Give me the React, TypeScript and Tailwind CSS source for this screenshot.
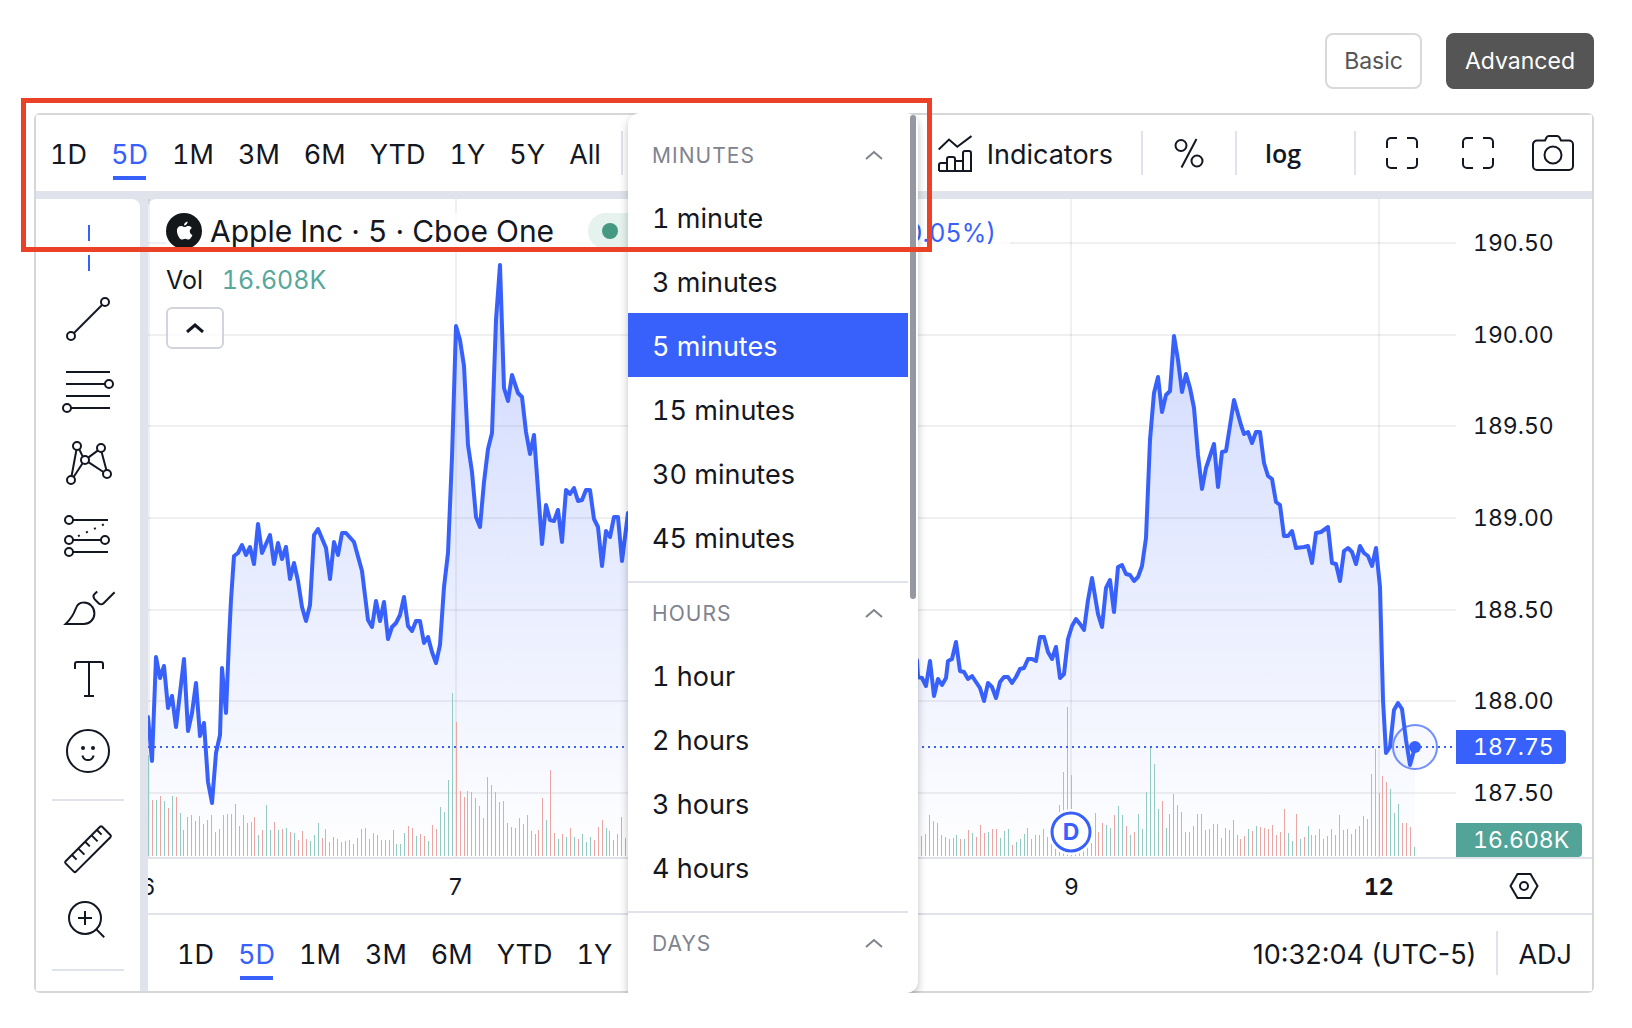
import type { ReactNode } from "react";

const RANGES = ["1D", "5D", "1M", "3M", "6M", "YTD", "1Y", "5Y", "All"];

const INTERVALS = [
  {
    title: "Minutes",
    items: ["1 minute", "3 minutes", "5 minutes", "15 minutes", "30 minutes", "45 minutes"],
  },
  { title: "Hours", items: ["1 hour", "2 hours", "3 hours", "4 hours"] },
  { title: "Days", items: [] },
];

const PRICES = ["190.50", "190.00", "189.50", "189.00", "188.50", "188.00", "187.50"];

const GRID_Y = [243, 335, 426, 518, 610, 701, 793];
const GRID_X = [149, 456, 764, 1071, 1379];

const BAR_STEP = 3.944;

const LINE =
  "148,717 152,761 156,657 160,678 164,666 168,708 172,696 176,727 184,659 188,731 192,713 196,683 200,736 204,723 208,782 212,803 216,753 220,735 222,668 226,713 229,640 231,600 234,556 238,553 242,545 246,555 250,547 254,564 258,524 262,553 270,535 274,564 278,543 282,559 286,547 290,579 294,563 298,581 302,607 306,621 310,605 314,535 318,529 326,548 330,579 334,542 338,555 342,533 346,533 354,542 362,571 368,620 372,627 376,601 380,621 384,602 388,639 392,627 396,623 400,615 404,597 408,626 412,631 416,621 420,621 424,643 428,637 432,652 436,663 440,645 444,587 448,553 452,457 456,326 460,340 464,366 468,445 472,472 476,517 480,527 484,482 488,449 492,433 496,320 500,265 504,388 508,401 512,375 518,393 522,397 526,432 530,454 534,435 542,544 546,505 550,520 554,521 558,510 562,542 566,490 570,494 574,488 578,501 582,500 586,490 590,490 594,519 598,527 602,566 606,531 610,537 614,517 618,517 622,561 628,513 " +
  "917,660 918,677 922,678 926,686 930,661 934,696 938,679 942,685 946,678 948,661 952,659 956,642 960,671 964,672 968,679 972,676 976,682 980,688 984,701 988,683 992,687 996,698 1000,682 1004,677 1008,677 1012,683 1016,677 1020,669 1024,668 1028,659 1032,659 1036,661 1040,637 1044,637 1048,652 1052,659 1056,647 1060,678 1064,674 1068,639 1072,626 1076,619 1080,624 1084,630 1088,600 1092,578 1098,614 1102,627 1106,588 1110,580 1114,612 1118,567 1122,565 1126,574 1130,575 1134,581 1138,577 1142,566 1146,538 1150,440 1154,393 1158,377 1162,412 1166,395 1170,391 1174,336 1178,360 1182,392 1186,374 1190,388 1194,408 1198,455 1202,489 1206,468 1214,444 1218,487 1222,452 1226,451 1234,400 1241,425 1244,434 1248,432 1252,443 1256,432 1260,432 1264,463 1268,476 1272,479 1276,502 1280,505 1284,536 1288,536 1292,531 1296,548 1304,547 1308,546 1312,563 1316,533 1321,532 1328,527 1332,563 1336,564 1340,581 1344,551 1348,548 1352,552 1356,564 1360,546 1364,553 1368,556 1372,566 1376,548 1380,587 1383,700 1386,753 1390,747 1394,710 1398,703 1402,709 1406,740 1410,765 1415,747";

// g = up, r = down, followed by the bar height
const VOLUME_LEFT =
  "g101 r56 g56 r60 g55 r48 g60 r59 g43 g26 r39 g41 g35 r40 g32 r36 r41 g24 g27 g41 r42 g42 g52 g30 g41 r33 g34 r39 g21 r26 g51 g26 r34 g26 r27 g28 r24 g23 r16 r25 r17 g15 g21 g33 r18 r27 r14 g19 r17 g14 g15 r16 r12 r18 r27 r28 r17 r23 g21 r16 g16 r16 g26 g12 g12 g23 r30 r28 g20 r22 r20 g15 r31 r27 g49 g44 g76 g163 r134 r65 r59 r65 r64 r58 r50 g38 g79 g71 g64 g54 r55 r33 g29 r28 r38 r32 r41 r25 g22 r26 r58 g36 r86 r23 g17 r22 g19 r28 g19 r17 g22 g14 g19 r16 r29 r36 g28 r25 g16 r22 r39 g18";
const VOLUME_RIGHT =
  "g20 r22 g41 r35 g33 r21 g19 g17 g18 g21 r17 g17 r26 g23 r19 r31 r23 g24 r27 r27 g18 g25 g27 r11 g14 g17 g22 g28 g17 r21 g21 r27 g19 g26 g8 r51 r84 g149 r81 r36 r20 r14 g12 g13 r43 r24 r33 g31 g28 r41 g50 g41 r30 g21 r24 g42 g27 g64 g110 g92 g47 r55 g28 g42 g62 r51 r44 g24 r24 r30 r42 r42 g26 g27 g32 r32 g18 g28 g26 g36 r21 r17 r20 g27 r25 g30 r29 r28 r27 r31 r21 r24 r47 g23 g15 r42 g17 r19 g30 r21 g21 g27 r17 g20 r27 r21 r41 g26 g27 r22 r27 g30 r40 r37 r82 g107 g63 r80 r74 g67 g43 g52 r33 r33 r29 g9";

function VolumeBars({ data, start }: { data: string; start: number }) {
  return (
    <g shapeRendering="crispEdges">
      {data.split(" ").map((bar, i) => {
        const height = Number(bar.slice(1));
        return (
          <rect
            key={i}
            x={Math.round(start + i * BAR_STEP)}
            y={856 - height}
            width={1}
            height={height}
            fill={bar[0] === "g" ? "#93cbc3" : "#eba5a3"}
          />
        );
      })}
    </g>
  );
}

function Chart() {
  return (
    <svg
      viewBox="148 199 1308 658"
      preserveAspectRatio="none"
      className="block h-[658px] w-full"
      role="img"
      aria-label="Apple Inc price chart"
    >
      <defs>
        <linearGradient id="area" gradientUnits="userSpaceOnUse" x1="0" y1="199" x2="0" y2="857">
          <stop offset="0" stopColor="#3861fb" stopOpacity="0.28" />
          <stop offset="1" stopColor="#3861fb" stopOpacity="0" />
        </linearGradient>
      </defs>
      <g stroke="#000" strokeOpacity="0.06" strokeWidth="2">
        {GRID_Y.map((y) => (
          <line key={y} x1="148" x2="1456" y1={y} y2={y} />
        ))}
        {GRID_X.map((x) => (
          <line key={x} x1={x} x2={x} y1="199" y2="857" />
        ))}
      </g>
      <polygon points={`148,857 ${LINE} 1415,857`} fill="url(#area)" />
      <VolumeBars data={VOLUME_LEFT} start={148} />
      <VolumeBars data={VOLUME_RIGHT} start={921} />
      <line x1="148" x2="1456" y1="747" y2="747" stroke="#3861fb" strokeWidth="2" strokeDasharray="2 4" />
      <polyline
        points={LINE}
        fill="none"
        stroke="#3861fb"
        strokeWidth="4"
        strokeLinejoin="round"
        strokeLinecap="round"
      />
      <circle cx="1415" cy="747" r="22" fill="#3861fb" fillOpacity="0.04" stroke="#3861fb" strokeOpacity="0.7" strokeWidth="2" />
      <circle cx="1415" cy="747" r="6" fill="#3861fb" />
      <circle cx="1071" cy="832" r="23" fill="#fff" />
      <circle cx="1071" cy="832" r="19" fill="#fff" stroke="#3861fb" strokeWidth="3" />
      <text x="1071" y="840" textAnchor="middle" fontSize="23" fontWeight="700" fill="#3861fb">
        D
      </text>
    </svg>
  );
}

function RangeTabs({ ranges }: { ranges: string[] }) {
  return (
    <nav className="flex h-full items-center">
      {ranges.map((range) => (
        <button
          key={range}
          className={
            range === "5D"
              ? "relative flex h-full items-center px-3 pt-[3px] text-[#3861fb] after:absolute after:inset-x-[14px] after:bottom-[11px] after:h-1 after:bg-[#3861fb]"
              : "flex h-full items-center px-3 pt-[3px]"
          }
        >
          {range}
        </button>
      ))}
    </nav>
  );
}

function Chevron({ className }: { className: string }) {
  return (
    <svg viewBox="0 0 18 10" className={className} fill="none" stroke="currentColor" aria-hidden="true">
      <path d="M1 9l8-7 8 7" />
    </svg>
  );
}

function Divider() {
  return <span className="h-11 w-[2px] bg-[#e0e3eb]" />;
}

function ToolButton({ label, children }: { label: string; children: ReactNode }) {
  return (
    <button aria-label={label} className="flex h-[72px] w-full items-center justify-center">
      <svg viewBox="0 0 28 28" className="size-14" fill="none" stroke="currentColor">
        {children}
      </svg>
    </button>
  );
}

function DrawingTools() {
  return (
    <aside className="w-[104px] shrink-0 rounded-tr-lg bg-white pt-3">
      <ToolButton label="Cross">
        <path stroke="#3861fb" d="M14.5 3v8M14.5 18v8" />
      </ToolButton>
      <ToolButton label="Trend line">
        <path d="M7 21L21 7" />
        <circle cx="22.5" cy="5.5" r="2" />
        <circle cx="5.5" cy="22.5" r="2" />
      </ToolButton>
      <ToolButton label="Fib retracement">
        <path d="M3 4.5h22M3 10.5h19.5M3 16.5h22M5.5 22.5H25" />
        <circle cx="24.5" cy="10.5" r="2" />
        <circle cx="3.5" cy="22.5" r="2" />
      </ToolButton>
      <ToolButton label="Patterns">
        <path d="M8.2 7.5l-2.4 13M9.6 7.1l1.8 3.7M14.1 11.3l4.9-3.6M20.8 8.5l2.4 9M14.2 13.6l7.5 4.9M11.3 14.1L6.8 21" />
        <circle cx="8.5" cy="5.5" r="2" />
        <circle cx="20.5" cy="6.5" r="2" />
        <circle cx="12.5" cy="12.5" r="2" />
        <circle cx="5.5" cy="22.5" r="2" />
        <circle cx="23.5" cy="19.5" r="2" />
      </ToolButton>
      <ToolButton label="Prediction and measurement">
        <path d="M6.5 6.5H24M6.5 16.5h14M6.5 22.5H24" />
        <path strokeDasharray="1 3.4" d="M9 14.6l14-6.4" />
        <circle cx="4.5" cy="6.5" r="2" />
        <circle cx="4.5" cy="16.5" r="2" />
        <circle cx="22.5" cy="16.5" r="2" />
        <circle cx="4.5" cy="22.5" r="2" />
      </ToolButton>
      <ToolButton label="Brush">
        <path d="M2.8 22.5h9a5.3 5.3 0 0 0 5.4-5.3 5.3 5.3 0 0 0-5.5-5.4c-2 0-3.3 1.4-3.9 3.2-1 2.8-2.4 5-5 7.5z" />
        <path d="M18.6 6.3l-1.3 1.2a1.5 1.5 0 0 0-.4 1.8l.4.8 2 2a1.8 1.8 0 0 0 2.5 0l5.5-5.5" />
      </ToolButton>
      <ToolButton label="Text">
        <path d="M7.5 9V6.5a1 1 0 0 1 1-1h12a1 1 0 0 1 1 1V9M14.5 5.5v17M12 22.5h5" />
      </ToolButton>
      <ToolButton label="Icons">
        <circle cx="14" cy="14" r="10.5" />
        <circle cx="11.5" cy="12.5" r="1" fill="currentColor" stroke="none" />
        <circle cx="16.5" cy="12.5" r="1" fill="currentColor" stroke="none" />
        <path d="M11.2 16.2c.4 1.4 1.5 2.3 2.8 2.3s2.4-.9 2.8-2.3" />
      </ToolButton>
      <hr className="mx-4 my-3 border-t-2 border-[#e0e3eb]" />
      <ToolButton label="Measure">
        <path
          strokeLinejoin="round"
          d="M2.8 20.1L20 2.9a.8.8 0 0 1 1.1 0l4.1 4.1a.8.8 0 0 1 0 1.1L8 25.3a.8.8 0 0 1-1.1 0l-4.1-4.1a.8.8 0 0 1 0-1.1zM6 17l2.3 2.3M9.2 13.8l3 3M12.6 10.4l2.3 2.3M15.8 7.2l3 3M18.5 4.5l2.3 2.3"
        />
      </ToolButton>
      <ToolButton label="Zoom in">
        <circle cx="12.5" cy="12.5" r="8" />
        <path d="M9 12.5h7M12.5 9v7M18.2 18.2l3.9 3.9" />
      </ToolButton>
      <hr className="mx-4 my-3 border-t-2 border-[#e0e3eb]" />
    </aside>
  );
}

function FullscreenIcon() {
  return (
    <svg viewBox="0 0 32 32" className="size-8" fill="none" stroke="currentColor" strokeWidth="2" aria-hidden="true">
      <path d="M1 11V5a4 4 0 0 1 4-4h6M21 1h6a4 4 0 0 1 4 4v6M31 21v6a4 4 0 0 1-4 4h-6M11 31H5a4 4 0 0 1-4-4v-6" />
    </svg>
  );
}

function TopToolbar() {
  return (
    <header className="flex h-[76px] items-center justify-between bg-white pr-[18px] pl-[2px]">
      <div className="flex h-full items-center gap-2">
        <RangeTabs ranges={RANGES} />
        <Divider />
      </div>
      <div className="flex items-center">
        <button className="flex items-center gap-[15px]">
          <svg viewBox="0 0 34 37" className="h-[37px] w-[34px]" fill="none" stroke="currentColor" strokeWidth="2" aria-hidden="true">
            <path d="M.7 14.5L11 4.5l8.3 7.3L33.5 1M1 36V30q0-2 2-2h6v8M9 36V24q0-2 2-2h4q2 0 2 2v12M17 26h8M25 36V18q0-2 2-2h4q2 0 2 2v18H1" />
          </svg>
          <span className="pt-[3px]">Indicators</span>
        </button>
        <span className="ml-7 flex">
          <Divider />
        </span>
        <button aria-label="Percent scale" className="mx-[31px]">
          <svg viewBox="0 0 30 30" className="size-[30px]" fill="none" stroke="currentColor" strokeWidth="2">
            <circle cx="7" cy="7.5" r="5.5" />
            <circle cx="23" cy="23" r="5.5" />
            <path d="M22.5 1L7.5 29.5" />
          </svg>
        </button>
        <Divider />
        <button className="ml-7 w-[89px] text-left font-['Open_Sans',sans-serif] text-[25px] font-semibold">log</button>
        <Divider />
        <button aria-label="Fullscreen" className="ml-[30px]">
          <FullscreenIcon />
        </button>
        <button aria-label="Expand" className="ml-11">
          <FullscreenIcon />
        </button>
        <button aria-label="Take a snapshot" className="ml-[38px]">
          <svg viewBox="0 0 42 36" className="h-9 w-[42px]" fill="none" stroke="currentColor" strokeWidth="2">
            <path d="M13 5.500l1.500-3q.8-1.500 2.500-1.500h8q1.700 0 2.500 1.500l1.500 3h8a4 4 0 0 1 4 4V31a4 4 0 0 1-4 4H5a4 4 0 0 1-4-4V9.500a4 4 0 0 1 4-4z" />
            <circle cx="21" cy="20" r="8.5" />
          </svg>
        </button>
      </div>
    </header>
  );
}

function Legend() {
  return (
    <div className="absolute top-[14px] left-[18px] flex flex-col items-start">
      <div className="flex h-9 items-center bg-white/80 pr-[14px]">
        <svg viewBox="0 0 36 36" className="size-9" aria-hidden="true">
          <circle cx="18" cy="18" r="18" fill="#14171a" />
          <path
            fill="#fff"
            d="M21.6 8.5c.2 2-1.6 4-3.5 4-.3-2 1.6-3.900 3.500-4zM25.800 15c-3 1.800-2.500 5.700.6 7-.8 2.200-2.300 4.600-4 4.600-1.300 0-1.700-.8-3.300-.8s-2.100.8-3.300.8c-2.700 0-6-7.600-4.500-11 1.200-2.600 3.800-3 5.600-2.100 1.500.7 2 .7 3.500 0 1.900-.9 4.200-.4 5.400 1.500z"
          />
        </svg>
        <h1 className="ml-2 w-[378px] text-[30px] leading-9">Apple Inc · 5 · Cboe One</h1>
        <span className="flex h-9 w-[88px] items-center rounded-full bg-[#e5f2ee] pl-[14px]">
          <span className="size-4 rounded-full bg-[#459881]" />
        </span>
        <p className="w-80 pt-[3px] text-right text-[25px] text-[#3861fb]">(+0.05%)</p>
      </div>
      <p className="mt-[13px] text-[25px] leading-9">
        Vol <span className="ml-3 text-[#57a89c]">16.608K</span>
      </p>
      <button
        aria-label="Collapse legend"
        className="mt-[9px] flex h-[42px] w-[58px] items-center justify-center rounded-md border-2 border-[#d1d4dc] bg-white/80"
      >
        <Chevron className="h-[10px] w-[18px] stroke-[3px]" />
      </button>
    </div>
  );
}

function PriceAxis() {
  return (
    <div className="relative flex h-[658px] w-[136px] shrink-0 flex-col justify-between pt-[30px] pb-[50px] pl-[17px] text-[23px] leading-7">
      {PRICES.map((price) => (
        <span key={price}>{price}</span>
      ))}
      <span className="absolute top-[531px] left-0 flex h-[34px] w-[110px] items-center rounded-r bg-[#3861fb] pl-[17px] text-white">
        187.75
      </span>
      <span className="absolute bottom-0 left-0 flex h-[34px] w-[126px] items-center rounded-r bg-[#53a498] pl-[17px] text-white">
        16.608K
      </span>
    </div>
  );
}

function TimeAxis() {
  return (
    <div className="flex h-[58px] border-y-2 border-[#e0e3eb] text-[23px]">
      <div className="relative flex-1 overflow-hidden leading-[56px]">
        <span className="absolute left-0 -translate-x-1/2">6</span>
        <span className="absolute left-[23.5%] -translate-x-1/2">7</span>
        <span className="absolute left-[70.6%] -translate-x-1/2">9</span>
        <span className="absolute left-[94.1%] -translate-x-1/2 font-bold">12</span>
      </div>
      <div className="flex w-[136px] items-center justify-center">
        <button aria-label="Chart settings">
          <svg viewBox="0 0 30 28" className="h-7 w-[30px]" fill="none" stroke="currentColor" strokeWidth="2">
            <path d="M8.5 2h13l7 12-7 12h-13l-7-12z" />
            <circle cx="15" cy="14" r="4" />
          </svg>
        </button>
      </div>
    </div>
  );
}

function IntervalMenu() {
  return (
    <div
      role="listbox"
      aria-label="Interval"
      className="absolute -top-[2px] -bottom-[2px] left-[592px] flex w-[290px] rounded-tl-xl rounded-r-xl bg-white shadow-[0_4px_8px_rgba(0,0,0,0.25)] [clip-path:inset(0_-12px)]"
    >
      <div className="w-[280px] pt-3">
        {INTERVALS.map(({ title, items }) => (
          <section key={title} className="mb-3 border-[#e0e3eb] not-first:border-t-2">
            <button className="flex h-[60px] w-full items-center justify-between pr-[25px] pl-6 text-[21px] tracking-wider text-[#80838e] uppercase">
              <span className="pt-[2px]">{title}</span>
              <Chevron className="h-[10px] w-[18px] stroke-2" />
            </button>
            {items.map((item) => (
              <button
                key={item}
                role="option"
                aria-selected={item === "5 minutes"}
                className={
                  item === "5 minutes"
                    ? "block h-16 w-full bg-[#3861fb] pt-[3px] pl-6 text-left text-white"
                    : "block h-16 w-full pt-[3px] pl-6 text-left"
                }
              >
                {item}
              </button>
            ))}
          </section>
        ))}
      </div>
      <div className="mt-[2px] ml-[2px] h-[484px] w-[6px] rounded-full bg-[#9598a1]" />
    </div>
  );
}

export default function App() {
  return (
    <main className="bg-white pt-[33px] pr-[38px] pb-[35px] pl-[34px] font-['Inter',sans-serif] text-[#131722] tabular-nums">
      <div className="flex justify-end gap-6 text-[23px]">
        <button className="h-14 rounded-lg border-2 border-[#d9d9d9] px-[17px] text-[#555]">Basic</button>
        <button className="h-14 rounded-lg border-2 border-[#555] bg-[#555] px-[17px] text-white">Advanced</button>
      </div>

      <div className="relative mt-6 rounded-md border-2 border-[#d6d7d9] bg-[#e0e3eb] text-[27px] leading-10">
        <TopToolbar />
        <div className="flex gap-2 pt-2">
          <DrawingTools />
          <div className="min-w-0 flex-1 rounded-tl-lg bg-white">
            <div className="relative flex">
              <div className="min-w-0 flex-1">
                <Chart />
              </div>
              <PriceAxis />
              <Legend />
            </div>
            <TimeAxis />
            <footer className="flex h-[76px] items-center justify-between pr-5 pl-[17px]">
              <RangeTabs ranges={RANGES.slice(0, 7)} />
              <div className="flex items-center gap-5">
                <button className="pt-[3px] normal-nums">10:32:04 (UTC-5)</button>
                <Divider />
                <button className="pt-[3px]">ADJ</button>
              </div>
            </footer>
          </div>
        </div>
        <IntervalMenu />
        {/* highlight around the range and interval controls */}
        <div className="pointer-events-none absolute -top-[17px] -left-[15px] h-[154px] w-[911px] border-[5px] border-[#eb4127]" />
      </div>
    </main>
  );
}
